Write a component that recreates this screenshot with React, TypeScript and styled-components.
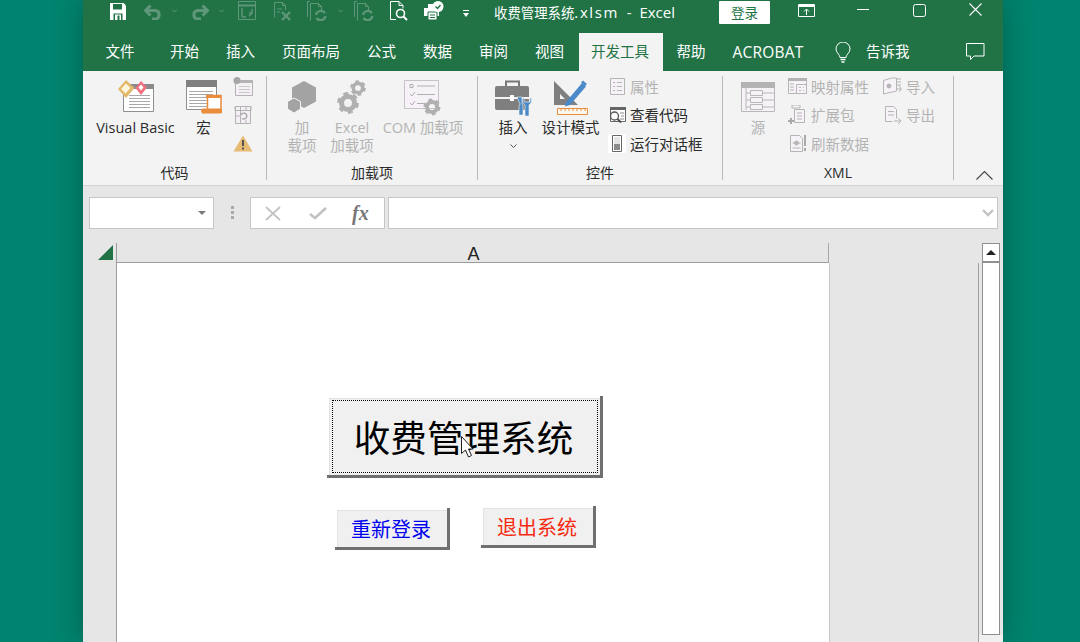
import React from 'react';
import styled, {createGlobalStyle} from 'styled-components';

const $GREEN = '#217346';
const $TEXT = '#2b2b2b';
const $DISABLED = '#b3b3b3';
const $QAT_OFF = '#5f977b';
const FONT = '"Open Sans", "Noto Sans CJK SC", sans-serif';

const GlobalStyle = createGlobalStyle`
  html, body {
    margin: 0;
    padding: 0;
    width: 1080px;
    height: 642px;
    overflow: hidden;
    background: #00846f;
    font-family: ${FONT};
  }
`;

const Page = styled.div`
  width: 1080px;
  height: 642px;
  overflow: hidden;
  padding-left: 83px;
  box-sizing: border-box;
`;

const Win = styled.div`
  width: 920px;
  height: 642px;
  display: flex;
  flex-direction: column;
  background: #e6e6e6;
  box-shadow: 0 0 26px rgba(0, 40, 30, 0.38);
`;

const TitleBar = styled.div`
  height: 33px;
  flex: none;
  display: flex;
  align-items: flex-start;
  background: ${$GREEN};
  color: #fff;
  padding-left: 27px;
`;

const QatIcon = styled.span<{$ml?: number; $top?: number}>`
  display: flex;
  margin-left: ${p => p.$ml ?? 0}px;
  margin-top: ${p => p.$top ?? 3}px;
  flex: none;
`;

const TitleText = styled.div`
  margin-left: 25px;
  width: 225px;
  flex: none;
  font-size: 13.4px;
  line-height: 24px;
  white-space: pre;
`;

const TitleLatin = styled.span<{$spacing?: number}>`
  font-size: 15px;
  letter-spacing: ${p => p.$spacing ?? 0}px;
`;

const LoginButton = styled.div`
  width: 51px;
  height: 23px;
  margin-top: 1px;
  background: #fff;
  color: ${$GREEN};
  font-size: 13.5px;
  line-height: 24px;
  text-align: center;
  border-radius: 1px;
  flex: none;
`;

const TabBar = styled.div`
  height: 38px;
  flex: none;
  display: flex;
  background: ${$GREEN};
  padding-left: 9px;
`;

const Tab = styled.div<{$active?: boolean; $ml?: number; $latin?: boolean}>`
  padding: ${p => (p.$active ? '0 14px 0 12px' : '0 13.5px')};
  margin-left: ${p => (p.$active ? 1.5 : p.$ml ?? 0)}px;
  font-size: ${p => (p.$latin ? 15.5 : 14.5)}px;
  line-height: 38px;
  letter-spacing: ${p => (p.$latin ? 0.2 : 0)}px;
  color: ${p => (p.$active ? $GREEN : '#fff')};
  background: ${p => (p.$active ? '#f3f3f3' : 'transparent')};
  white-space: nowrap;
`;

const TabIcon = styled.span<{$ml: number}>`
  display: flex;
  align-items: center;
  margin-left: ${p => p.$ml}px;
`;

const TellMe = styled.div`
  margin-left: 15px;
  font-size: 14.5px;
  line-height: 38px;
  color: #fff;
`;

const Ribbon = styled.div`
  height: 114px;
  flex: none;
  display: flex;
  background: #f3f3f3;
  border-bottom: 1px solid #d2d2d2;
`;

const Group = styled.div<{$w: number}>`
  width: ${p => p.$w}px;
  flex: none;
  display: flex;
  flex-direction: column;
  padding-top: 2px;
`;

const GroupBody = styled.div<{$pl: number}>`
  height: 91px;
  display: flex;
  padding-left: ${p => p.$pl}px;
`;

const GroupLabel = styled.div`
  height: 18px;
  line-height: 18px;
  text-align: center;
  font-size: 14px;
  color: ${$TEXT};
`;

const Separator = styled.div`
  width: 1px;
  height: 104px;
  margin-top: 5px;
  background: #b9b9b9;
  flex: none;
`;

const BigButton = styled.div<{$w: number; $ml?: number; $off?: boolean}>`
  width: ${p => p.$w}px;
  margin-left: ${p => p.$ml ?? 0}px;
  flex: none;
  display: flex;
  flex-direction: column;
  align-items: center;
  text-align: center;
  font-size: 14.5px;
  line-height: 18px;
  color: ${p => (p.$off ? $DISABLED : $TEXT)};
  white-space: nowrap;
`;

const BigIcon = styled.div`
  height: 46px;
  display: flex;
  align-items: center;
  justify-content: center;
`;

const SmallColumn = styled.div<{$ml: number}>`
  margin-left: ${p => p.$ml}px;
  margin-top: -1px;
  flex: none;
  display: flex;
  flex-direction: column;
`;

const SmallRow = styled.div<{$off?: boolean; $slot?: number}>`
  height: 28.5px;
  display: flex;
  align-items: center;
  gap: 4px;
  font-size: 14.5px;
  color: ${p => (p.$off ? $DISABLED : $TEXT)};
  white-space: nowrap;

  > svg {
    width: ${p => p.$slot ?? 19}px;
    flex: none;
  }
`;

const Collapse = styled.div`
  flex: 1;
  display: flex;
  align-items: flex-end;
  justify-content: flex-end;
  padding: 0 10px 5px 0;
`;

const FormulaBar = styled.div`
  height: 57px;
  flex: none;
  display: flex;
  align-items: flex-start;
  padding: 11px 0 0 6px;
  box-sizing: border-box;
`;

const FieldBox = styled.div<{$w: number; $ml?: number}>`
  height: 32px;
  box-sizing: border-box;
  width: ${p => p.$w}px;
  margin-left: ${p => p.$ml ?? 0}px;
  display: flex;
  align-items: center;
  background: #fff;
  border: 1px solid #c6c6c6;
`;

const Caret = styled.i`
  margin-left: auto;
  margin-right: 7px;
  border-left: 4px solid transparent;
  border-right: 4px solid transparent;
  border-top: 4px solid #7a7a7a;
`;

const DotGrip = styled.div`
  margin: 9px 0 0 17px;
  display: flex;
  flex-direction: column;
  gap: 2px;

  i {
    display: block;
    width: 3px;
    height: 3px;
    background: #a9a9a9;
  }
`;

const FxSlot = styled.span<{$ml: number}>`
  display: flex;
  margin-left: ${p => p.$ml}px;
`;

const FxLabel = styled.span`
  margin-left: 25px;
  font: italic bold 20px/20px "Liberation Serif", serif;
  color: #777;
`;

const Workspace = styled.div`
  flex: 1;
  display: flex;
  min-height: 0;
`;

const RowHeader = styled.div`
  width: 33px;
  flex: none;
  border-right: 1px solid #9c9c9c;
  height: 100%;
`;

const Corner = styled.div`
  height: 20px;
  display: flex;
  justify-content: flex-end;
  padding: 2px 3px 0 0;
`;

const SheetColumn = styled.div`
  width: 713px;
  flex: none;
  display: flex;
  flex-direction: column;
`;

const ColumnHeader = styled.div`
  height: 20px;
  width: 712px;
  box-sizing: border-box;
  padding-left: 2px;
  text-align: center;
  font: 18px/22px "Liberation Sans", sans-serif;
  color: #222;
  border-bottom: 1px solid #9c9c9c;
  border-right: 1px solid #a8a8a8;
`;

const Sheet = styled.div`
  position: relative;
  flex: 1;
  background: #fff;
  border-right: 1px solid #c8c8c8;
`;

const SheetButton = styled.div<{$x: number; $y: number; $w: number; $h: number; $size: number; $color: string}>`
  position: absolute;
  left: ${p => p.$x}px;
  top: ${p => p.$y}px;
  width: ${p => p.$w}px;
  height: ${p => p.$h}px;
  box-sizing: border-box;
  padding: 0 3px 2px 0;
  display: flex;
  align-items: center;
  justify-content: center;
  background: #f0f0f0;
  border-top: 1px solid #e2e2e2;
  border-left: 1px solid #e2e2e2;
  font-size: ${p => p.$size}px;
  color: ${p => p.$color};
  white-space: nowrap;

  &::before {
    content: '';
    position: absolute;
    left: -3px;
    right: -3px;
    bottom: -3px;
    height: 3px;
    background: #6f6f6f;
  }

  &::after {
    content: '';
    position: absolute;
    top: -3px;
    right: -3px;
    bottom: 0;
    width: 3px;
    background: #6f6f6f;
  }
`;

const FocusRing = styled.div`
  position: absolute;
  inset: 1px 2px 2px 2px;
  border: 1px dotted #000;
`;

const Pointer = styled.svg`
  position: absolute;
  left: 344px;
  top: 173px;
`;

const RightPane = styled.div`
  flex: 1;
  display: flex;
  justify-content: flex-start;
  min-width: 0;
`;

const RightGutter = styled.div`
  width: 149px;
  flex: none;
  margin-top: 20px;
  border-right: 1px solid #a0a0a0;
  box-sizing: border-box;
`;

const ScrollColumn = styled.div`
  margin-left: 3px;
  width: 18px;
  flex: none;
  display: flex;
  flex-direction: column;
`;

const ScrollUp = styled.div`
  height: 19px;
  box-sizing: border-box;
  background: #fff;
  border: 1px solid #8f8f8f;
  display: flex;
  align-items: center;
  justify-content: center;

  i {
    border-left: 5px solid transparent;
    border-right: 5px solid transparent;
    border-bottom: 5px solid #222;
  }
`;

const ScrollTrack = styled.div`
  height: 373px;
  box-sizing: border-box;
  background: #fff;
  border: 1px solid #8f8f8f;
`;

const ScrollFoot = styled.div`
  flex: 1;
  background: #f0f0f0;
  margin: 0 -3px;
`;

const Gear: React.FC<{x: number; y: number; r: number; fill: string}> = ({x, y, r, fill}) => {
  const c = 2 * Math.PI * r;
  return (
    <g fill="none" stroke={fill}>
      <circle cx={x} cy={y} r={r * 0.72} strokeWidth={r * 0.56} />
      <circle cx={x} cy={y} r={r} strokeWidth={r * 0.42} strokeDasharray={`${c / 12} ${c / 12}`} />
    </g>
  );
};

const SheetLines: React.FC<{x: number; y: number; w: number; rows: number; gap: number; color?: string}> = ({
  x, y, w, rows, gap, color = '#a8a8a8'
}) => (
  <g stroke={color} strokeWidth="1">
    {Array.from({length: rows}).map((_, i) => (
      <path key={i} d={`M${x} ${y + i * gap + 0.5}h${w}`} />
    ))}
  </g>
);

const App: React.FC = () => (
  <Page>
    <GlobalStyle />
    <Win>
      <TitleBar>
        <QatIcon>
          <svg width="16" height="17" viewBox="0 0 16 17">
            <path d="M0 0h13.5L16 2.5V17H0z" fill="#fff" />
            <path d="M3 1h9v5.5H3zM3.5 10.5h9V17h-9z" fill={$GREEN} />
            <path d="M5 11.5h6V17H5z" fill="#fff" />
            <path d="M7.5 12.5h2V17h-2z" fill={$GREEN} />
          </svg>
        </QatIcon>
        <QatIcon $ml={17} $top={4}>
          <svg width="19" height="16" viewBox="0 0 19 16" fill="none" stroke={$QAT_OFF} strokeWidth="3">
            <path d="M3 6.5h9.5a4.3 4.3 0 0 1 0 8.5H9" />
            <path d="M7.5 1.5 2.5 6.5l5 5" />
          </svg>
        </QatIcon>
        <QatIcon $ml={10} $top={9}>
          <svg width="5" height="4" viewBox="0 0 5 4" fill="none" stroke={$QAT_OFF}><path d="M0 .5l2.5 2.5L5 .5" /></svg>
        </QatIcon>
        <QatIcon $ml={14} $top={4}>
          <svg width="19" height="16" viewBox="0 0 19 16" fill="none" stroke={$QAT_OFF} strokeWidth="3">
            <path d="M16 6.5H6.5a4.3 4.3 0 0 0 0 8.5H10" />
            <path d="M11.5 1.5l5 5-5 5" />
          </svg>
        </QatIcon>
        <QatIcon $ml={9} $top={9}>
          <svg width="5" height="4" viewBox="0 0 5 4" fill="none" stroke={$QAT_OFF}><path d="M0 .5l2.5 2.5L5 .5" /></svg>
        </QatIcon>
        <QatIcon $ml={14} $top={1}>
          <svg width="18" height="19" viewBox="0 0 18 19" fill="none" stroke={$QAT_OFF}>
            <path d="M.5.500h17v18H.5z" />
            <path d="M.5 4.500h17" strokeWidth="2" />
            <path d="M4 7v9M8 16H4M11 15l3-3M14 8v4h-3" strokeWidth="1.500" />
          </svg>
        </QatIcon>
        <QatIcon $ml={18} $top={2}>
          <svg width="18" height="19" viewBox="0 0 18 19" fill="none" stroke={$QAT_OFF}>
            <path d="M.5 15.500V.5h8l3 3V8M8.500.5v3h3" />
            <path d="M3 7h5M3 10h3" />
            <path d="M8 10l8 8M16 10l-8 8" strokeWidth="2.400" />
          </svg>
        </QatIcon>
        <QatIcon $ml={15} $top={1}>
          <svg width="20" height="20" viewBox="0 0 20 20" fill="none" stroke={$QAT_OFF}>
            <path d="M.5 16V.5H3" />
            <path d="M3.500 19.500V2.500h8l3 3V9M11.500 2.500v3h3" />
            <path d="M9 14a5 5 0 0 1 9-2M18.500 15a5 5 0 0 1-9 2" strokeWidth="2.200" />
          </svg>
        </QatIcon>
        <QatIcon $ml={11} $top={9}>
          <svg width="5" height="4" viewBox="0 0 5 4" fill="none" stroke={$QAT_OFF}><path d="M0 .5l2.5 2.5L5 .5" /></svg>
        </QatIcon>
        <QatIcon $ml={11} $top={1}>
          <svg width="20" height="20" viewBox="0 0 20 20" fill="none" stroke={$QAT_OFF}>
            <path d="M.5 16V.5H3" />
            <path d="M3.500 19.500V2.500h8l3 3V9M11.500 2.500v3h3" />
            <path d="M9 14a5 5 0 0 1 9-2M18.500 15a5 5 0 0 1-9 2" strokeWidth="2.200" />
          </svg>
        </QatIcon>
        <QatIcon $ml={16} $top={1}>
          <svg width="18" height="20" viewBox="0 0 18 20" fill="none" stroke="#fff">
            <path d="M.5 18.500V.5H9l4 4v3M9 .5v4h4M.5 18.500H6" />
            <circle cx="10.500" cy="12.500" r="4" strokeWidth="1.600" />
            <path d="M13.500 15.500l3.500 3.500" strokeWidth="2" />
          </svg>
        </QatIcon>
        <QatIcon $ml={16} $top={1}>
          <svg width="20" height="20" viewBox="0 0 20 20">
            <path d="M4 3h8v4H4zM0 7h15v8H0z" fill="#fff" />
            <path d="M4 11h9v8H4z" fill="#fff" stroke={$GREEN} />
            <path d="M6 14h5M6 16.500h5" stroke={$GREEN} />
            <circle cx="14" cy="5.500" r="5.500" fill="#fff" />
            <path d="M11.500 5.500l2 2 3-3.500" stroke={$GREEN} strokeWidth="1.400" fill="none" />
          </svg>
        </QatIcon>
        <QatIcon $ml={19} $top={10}>
          <svg width="6" height="7" viewBox="0 0 6 7" fill="#fff"><path d="M0 0h6v1H0zM0 3h6L3 7z" /></svg>
        </QatIcon>
        <TitleText>
          收费管理系统<TitleLatin $spacing={1.6}>.xlsm</TitleLatin><TitleLatin>{'  -  Excel'}</TitleLatin>
        </TitleText>
        <LoginButton>登录</LoginButton>
        <QatIcon $ml={28} $top={4}>
          <svg width="17" height="13" viewBox="0 0 17 13" fill="none" stroke="#fff">
            <path d="M.5.500h16v12H.5z" />
            <path d="M.5 2h16" strokeWidth="2" />
            <path d="M8.500 11V5.500M6 7.500l2.500-2.500L11 7.500" />
          </svg>
        </QatIcon>
        <QatIcon $ml={42} $top={9}>
          <svg width="12" height="1" viewBox="0 0 12 1"><path d="M0 0h12v1H0z" fill="#fff" /></svg>
        </QatIcon>
        <QatIcon $ml={44} $top={4}>
          <svg width="13" height="13" viewBox="0 0 13 13" fill="none" stroke="#fff"><rect x=".5" y=".5" width="12" height="12" rx="2" /></svg>
        </QatIcon>
        <QatIcon $ml={43} $top={3}>
          <svg width="13" height="13" viewBox="0 0 13 13" fill="none" stroke="#fff" strokeWidth="1.100"><path d="M.5.500l12 12M12.500.500l-12 12" /></svg>
        </QatIcon>
      </TitleBar>

      <TabBar>
        <Tab>文件</Tab>
        <Tab $ml={8.5}>开始</Tab>
        <Tab>插入</Tab>
        <Tab>页面布局</Tab>
        <Tab>公式</Tab>
        <Tab>数据</Tab>
        <Tab>审阅</Tab>
        <Tab>视图</Tab>
        <Tab $active>开发工具</Tab>
        <Tab>帮助</Tab>
        <Tab $latin>ACROBAT</Tab>
        <TabIcon $ml={18}>
          <svg width="16" height="21" viewBox="0 0 16 21" fill="none" stroke="#fff">
            <path d="M5 15.500c0-3-4-4.500-4-8.500a7 7 0 0 1 14 0c0 4-4 5.500-4 8.500z" />
            <path d="M5.500 17.500h5M6.500 20h3" strokeWidth="1.400" />
          </svg>
        </TabIcon>
        <TellMe>告诉我</TellMe>
        <TabIcon $ml={57}>
          <svg width="19" height="18" viewBox="0 0 19 18" fill="none" stroke="#fff">
            <path d="M.5.500h17.500v12.500H8l-3.500 3.500V13H.5z" />
          </svg>
        </TabIcon>
      </TabBar>

      <Ribbon>
        <Group $w={183}>
          <GroupBody $pl={12}>
            <BigButton $w={81}>
              <BigIcon>
                <svg width="36" height="33" viewBox="0 0 36 33" style={{marginTop: 1}}>
                  <path d="M5.500 6.500h30v25h-30z" fill="#fff" stroke="#8e8e8e" />
                  <path d="M5 4h31v5H5z" fill="#8a8a8a" />
                  <SheetLines x={11} y={15} w={21} rows={5} gap={3} />
                  <path d="M8 0l8.500 8L8 18 0 9z" fill="#e2b96b" />
                  <path d="M8 3.500l4.500 4.500L7.500 13.500 3 9z" fill="#fff4dc" />
                  <path d="M23 1l6 6.500-6 7.500-5.500-7z" fill="#f0707f" />
                  <path d="M23 4.500l2.500 3-2.500 3-2.500-3z" fill="#fff" />
                </svg>
              </BigIcon>
              <span>Visual Basic</span>
            </BigButton>
            <BigButton $w={33} $ml={11}>
              <BigIcon>
                <svg width="36" height="34" viewBox="0 0 36 34" style={{marginTop: 2}}>
                  <path d="M.5.500h30v29H.5z" fill="#fff" stroke="#8e8e8e" />
                  <path d="M0 0h31v7H0z" fill="#808080" />
                  <SheetLines x={3} y={11} w={24} rows={6} gap={3} />
                  <path d="M21.500 15.500H35v15H21.500z" fill="#fff" stroke="#e98c3c" strokeWidth="1.500" />
                  <path d="M17 28.500h17a2 2 0 0 1 0 5H18.500a2 2 0 0 1-1.500-5z" fill="#e98c3c" />
                  <path d="M20 15h15v3H20z" fill="#e98c3c" />
                </svg>
              </BigIcon>
              <span>宏</span>
            </BigButton>
            <SmallColumn $ml={13}>
              <SmallRow $off $slot={20}>
                <svg height="19" viewBox="0 0 20 19">
                  <path d="M2.500 4.500h17v14h-17z" fill="#f5f0f5" stroke="#b3b3b3" />
                  <path d="M2 3h18v3H2z" fill="#b3b3b3" />
                  <circle cx="4" cy="3.500" r="3.500" fill="#a6a6a6" />
                  <SheetLines x={6} y={9} w={11} rows={3} gap={3} color="#c9c9c9" />
                </svg>
              </SmallRow>
              <SmallRow $off $slot={20}>
                <svg height="18" viewBox="0 0 20 18">
                  <path d="M2.500.5h15v17h-15z" fill="#f5f0f5" stroke="#b3b3b3" />
                  <path d="M2 .5h16v4H2zM7.500 1v16M13 1v4M2 10h5M13 14v3" stroke="#b3b3b3" fill="none" />
                  <path d="M8 9a3 3 0 1 1 1 3.500" fill="none" stroke="#a6a6a6" strokeWidth="1.400" />
                </svg>
              </SmallRow>
              <SmallRow $slot={20}>
                <svg height="17" viewBox="0 0 20 17">
                  <path d="M10 .5l9.500 16H.5z" fill="#e6bb73" />
                  <path d="M9 5h2v6H9zM9 12.500h2v2H9z" fill="#555" />
                </svg>
              </SmallRow>
            </SmallColumn>
          </GroupBody>
          <GroupLabel>代码</GroupLabel>
        </Group>
        <Separator />
        <Group $w={210}>
          <GroupBody $pl={17}>
            <BigButton $w={36} $off>
              <BigIcon>
                <svg width="30" height="32" viewBox="0 0 30 32" style={{marginTop: 2}}>
                  <path d="M17 0l12 6.500v14L17 27l-12-6.500v-14z" fill="#a3a3a3" />
                  <path d="M7 17l6.500 3.500v7.500L7 32 .5 28v-7.500z" fill="#a3a3a3" stroke="#f3f3f3" strokeWidth="1" />
                </svg>
              </BigIcon>
              <span>加</span>
              <span>载项</span>
            </BigButton>
            <BigButton $w={50} $ml={7} $off>
              <BigIcon>
                <svg width="30" height="35" viewBox="0 0 30 35" style={{marginTop: 3}}>
                  <Gear x={21} y={8} r={6.500} fill="#b0b0b0" />
                  <Gear x={11} y={23} r={9} fill="#b0b0b0" />
                </svg>
              </BigIcon>
              <span>Excel</span>
              <span>加载项</span>
            </BigButton>
            <BigButton $w={84} $ml={4} $off>
              <BigIcon>
                <svg width="38" height="37" viewBox="0 0 38 37" style={{marginTop: 4}}>
                  <path d="M.5.500h34v28H.5z" fill="#f7f2f7" stroke="#c4c4c4" />
                  <path d="M6 4.500h3v3H6zM13 6h18M6 14l2 2 3-4M13 14.500h18M6 23l2 2 3-4M13 23.500h8" fill="none" stroke="#b0b0b0" />
                  <Gear x={28} y={27} r={7} fill="#b0b0b0" />
                </svg>
              </BigIcon>
              <span>COM 加载项</span>
            </BigButton>
          </GroupBody>
          <GroupLabel>加载项</GroupLabel>
        </Group>
        <Separator />
        <Group $w={244}>
          <GroupBody $pl={15}>
            <BigButton $w={40}>
              <BigIcon>
                <svg width="38" height="36" viewBox="0 0 38 36" style={{marginTop: 3, marginLeft: 1}}>
                  <path d="M11 6V1.500h13V6" fill="none" stroke="#777" strokeWidth="2" />
                  <path d="M2 6h30a2 2 0 0 1 2 2v20a2 2 0 0 1-2 2H2a2 2 0 0 1-2-2V8a2 2 0 0 1 2-2z" fill="#7f7f7f" />
                  <path d="M0 17h34v2H0z" fill="#f3f3f3" />
                  <path d="M15 15h4v6h-4z" fill="#fff" />
                  <path d="M22 17h5v7l1 2v9h-4v-9l1-2z" fill="#4a8ac8" stroke="#f3f3f3" strokeWidth=".6" />
                  <path d="M29 17a5 5 0 0 0 1 8v11h4V25a5 5 0 0 0 1-8v5h-6z" fill="#4a8ac8" stroke="#f3f3f3" strokeWidth=".6" />
                </svg>
              </BigIcon>
              <span>插入</span>
              <svg width="7" height="5" viewBox="0 0 7 5" fill="none" stroke="#555" style={{marginTop: 7}}>
                <path d="M.5.500l3 3 3-3" />
              </svg>
            </BigButton>
            <BigButton $w={59} $ml={8}>
              <BigIcon>
                <svg width="35" height="36" viewBox="0 0 35 36" style={{marginTop: 4}}>
                  <path d="M1 1v24h24zM7 14v5h5z" fill="#7f7f7f" fillRule="evenodd" />
                  <path d="M13 22L29 3l4 3.500L17 25l-5 1.500z" fill="#4a8ac8" />
                  <path d="M28 2.500l2-2 4 3.500-2 2z" fill="#4a8ac8" />
                  <path d="M4.500 28.500h30v6h-30z" fill="#fdf8ef" stroke="#e98c3c" />
                  <path d="M8 29v2M12 29v2M16 29v2M20 29v2M24 29v2M28 29v2M32 29v2" stroke="#e98c3c" />
                </svg>
              </BigIcon>
              <span>设计模式</span>
            </BigButton>
            <SmallColumn $ml={8}>
              <SmallRow $off $slot={18}>
                <svg height="17" viewBox="0 0 18 17" fill="none" stroke="#b5b5b5">
                  <path d="M2.500.5h14v16h-14z" fill="#f7f2f7" />
                  <path d="M5 4.500h2M5 8.500h2M5 12.500h2M9 4.500h5M9 8.500h5M9 12.500h5" />
                </svg>
                <span>属性</span>
              </SmallRow>
              <SmallRow $slot={18}>
                <svg height="18" viewBox="0 0 18 18" fill="none">
                  <path d="M2.500 1.500h15v14h-15z" fill="#fff" stroke="#666" />
                  <path d="M2 1h16v3H2z" fill="#666" />
                  <path d="M12 7h4M13 10h3M12 13h4" stroke="#888" />
                  <circle cx="6.500" cy="10" r="4" fill="#fff" stroke="#555" strokeWidth="1.300" />
                  <path d="M9.500 13l3.500 3.500" stroke="#4f4f4f" strokeWidth="2" />
                </svg>
                <span>查看代码</span>
              </SmallRow>
              <SmallRow $slot={18}>
                <svg height="19" viewBox="0 0 18 19">
                  <path d="M0 0h18v19H0z" fill="#fff" />
                  <path d="M4.500 1.500h9v16h-9z" fill="#fff" stroke="#666" />
                  <path d="M6 3h6v7H6z" fill="#e4e4e4" />
                  <path d="M6 10h6v6H6z" fill="#8b8b8b" />
                </svg>
                <span>运行对话框</span>
              </SmallRow>
            </SmallColumn>
          </GroupBody>
          <GroupLabel>控件</GroupLabel>
        </Group>
        <Separator />
        <Group $w={230}>
          <GroupBody $pl={17}>
            <BigButton $w={36} $off>
              <BigIcon>
                <svg width="34" height="30" viewBox="0 0 34 30" style={{marginTop: 1}} fill="none" stroke="#b8b8b8">
                  <path d="M.5.500h33v29H.5z" fill="#f7f2f7" />
                  <path d="M0 0h34v6H0z" fill="#b3b3b3" stroke="none" />
                  <path d="M9.500 8.500h12v5h-12zM9.500 15.500h12v5h-12zM9.500 22.500h12v5h-12zM5 6v22M5 11h4M5 18h4M5 25h4M22 11h11M22 18h11M22 25h11" />
                </svg>
              </BigIcon>
              <span>源</span>
            </BigButton>
            <SmallColumn $ml={12}>
              <SmallRow $off $slot={19}>
                <svg height="16" viewBox="0 0 19 16" fill="none" stroke="#b5b5b5">
                  <path d="M.5.500h18v15H.5z" fill="#f7f2f7" />
                  <path d="M0 0h19v3H0z" fill="#b3b3b3" stroke="none" />
                  <path d="M8.500 6.500h10v9h-10zM11 9.500h2M15 9.500h1M11 12.500h2M15 12.500h1M2 6h4M2 9h4M2 12h4" />
                </svg>
                <span>映射属性</span>
              </SmallRow>
              <SmallRow $off $slot={19}>
                <svg height="19" viewBox="0 0 19 19" fill="none" stroke="#b5b5b5">
                  <path d="M6.500 4.500h10v13h-10z" fill="#f7f2f7" />
                  <path d="M9 8h5M9 11h5M9 14h5M4 0h8v3H4z" />
                  <path d="M3 13v6M0 16h6" strokeWidth="2" stroke="#aaa" />
                </svg>
                <span>扩展包</span>
              </SmallRow>
              <SmallRow $off $slot={19}>
                <svg height="18" viewBox="0 0 19 18" fill="none" stroke="#b5b5b5">
                  <path d="M2.500 1.500h9l3 3v13h-12z" fill="#f7f2f7" />
                  <circle cx="8.500" cy="9" r="2" fill="#b5b5b5" />
                  <path d="M4.500 9h8M4.500 14h8" />
                  <path d="M17 1v11M17 14v3" strokeWidth="2" stroke="#aaa" />
                </svg>
                <span>刷新数据</span>
              </SmallRow>
            </SmallColumn>
            <SmallColumn $ml={13}>
              <SmallRow $off $slot={20}>
                <svg height="18" viewBox="0 0 20 18" fill="none" stroke="#b5b5b5">
                  <path d="M1.500 3.500l8-2.500h5v13l-13 3z" fill="#f7f2f7" />
                  <circle cx="7" cy="9" r="2" fill="#b5b5b5" />
                  <path d="M14 2h5M14 5h5M14 8h5M15 12h4M17 9l2.500 3-2.500 3" />
                </svg>
                <span>导入</span>
              </SmallRow>
              <SmallRow $off $slot={20}>
                <svg height="18" viewBox="0 0 20 18" fill="none" stroke="#b5b5b5">
                  <path d="M3.500.5h8l3 3v9M3.500.5v15h7" fill="#f7f2f7" />
                  <path d="M6 5.500h6M6 9h6M12 15h7M16 12l3 3-3 3" />
                </svg>
                <span>导出</span>
              </SmallRow>
            </SmallColumn>
          </GroupBody>
          <GroupLabel>XML</GroupLabel>
        </Group>
        <Separator />
        <Collapse>
          <svg width="17" height="9" viewBox="0 0 17 9" fill="none" stroke="#444" strokeWidth="1.100">
            <path d="M.5 8.500L8.500.5l8 8" />
          </svg>
        </Collapse>
      </Ribbon>

      <FormulaBar>
        <FieldBox $w={125}>
          <Caret />
        </FieldBox>
        <DotGrip><i /><i /><i /></DotGrip>
        <FieldBox $w={135} $ml={16}>
          <FxSlot $ml={14}>
            <svg width="16" height="15" viewBox="0 0 16 15" fill="none" stroke="#c3c3c3" strokeWidth="1.800"><path d="M1 1l14 13M15 1L1 14" /></svg>
          </FxSlot>
          <FxSlot $ml={28}>
            <svg width="18" height="13" viewBox="0 0 18 13" fill="none" stroke="#c3c3c3" strokeWidth="2.800"><path d="M1 7l5 4L17 1" /></svg>
          </FxSlot>
          <FxLabel>fx</FxLabel>
        </FieldBox>
        <FieldBox $w={610} $ml={3}>
          <svg width="12" height="9" viewBox="0 0 12 9" fill="none" stroke="#c3c3c3" strokeWidth="2.400" style={{marginLeft: 'auto', marginRight: 3}}>
            <path d="M1 1l5 5 5-5" />
          </svg>
        </FieldBox>
      </FormulaBar>

      <Workspace>
        <RowHeader>
          <Corner>
            <svg width="15" height="15" viewBox="0 0 15 15"><path d="M15 0v15H0z" fill={$GREEN} /></svg>
          </Corner>
        </RowHeader>
        <SheetColumn>
          <ColumnHeader>A</ColumnHeader>
          <Sheet>
            <SheetButton $x={212} $y={135} $w={271} $h={77} $size={36.6} $color="#000">
              <FocusRing />
              收费管理系统
            </SheetButton>
            <SheetButton $x={220} $y={247} $w={110} $h={37} $size={20} $color="#0000f0">重新登录</SheetButton>
            <SheetButton $x={366} $y={245} $w={110} $h={37} $size={20} $color="#f52a10">退出系统</SheetButton>
            <Pointer width="12" height="23" viewBox="0 0 12 23">
              <path d="M.5.500v17l4-3.500 3 7 3-1.500-3-6.500h4.500z" fill="#fff" stroke="#222" />
            </Pointer>
          </Sheet>
        </SheetColumn>
        <RightPane>
          <RightGutter />
          <ScrollColumn>
            <ScrollUp><i /></ScrollUp>
            <ScrollTrack />
            <ScrollFoot />
          </ScrollColumn>
        </RightPane>
      </Workspace>
    </Win>
  </Page>
);

export default App;
